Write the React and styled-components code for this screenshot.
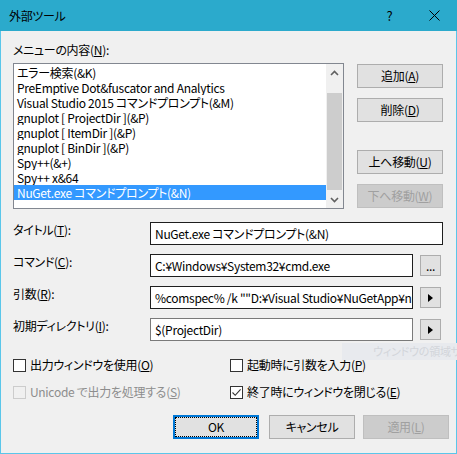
import React from "react";
import styled, { createGlobalStyle, css } from "styled-components";

const Global = createGlobalStyle`
  html, body { margin: 0; padding: 0; background: #f0f0f0; }
  body {
    font-family: "Noto Sans CJK JP", "Noto Sans", sans-serif;
    font-size: 12px;
    letter-spacing: -0.3px;
    color: #000;
    font-feature-settings: "palt";
  }
  * { box-sizing: border-box; }
`;

const Window = styled.div`
  position: relative;
  width: 457px;
  height: 454px;
  display: flex;
  flex-direction: column;
  overflow: hidden;
  background: #f0f0f0;
`;

const TitleBar = styled.div`
  flex: none;
  height: 31px;
  background: #2baacc;
  display: flex;
  align-items: center;
`;

const Title = styled.div`
  flex: 1;
  padding-left: 9px;
  line-height: 16px;
`;

const CaptionButton = styled.div`
  width: 45px;
  height: 31px;
  display: flex;
  align-items: center;
  justify-content: center;
  font-size: 13px;
`;

const Body = styled.div`
  flex: 1;
  display: flex;
  flex-direction: column;
  border: 1px solid #5ac6ea;
  border-top: none;
  padding: 11px 13px 0 12px;
`;

const Key = styled.span`
  text-decoration: underline;
  text-underline-offset: 1px;
`;

const SectionLabel = styled.div`
  line-height: 16px;
  height: 16px;
`;

const TopGrid = styled.div`
  margin-top: 5px;
  display: grid;
  grid-template-columns: 331px 86px;
  column-gap: 13px;
  align-items: start;
`;

const ListBox = styled.div`
  height: 146px;
  border: 1px solid #828790;
  background: #fff;
  display: grid;
  grid-template-columns: 1fr 17px;
`;

const Items = styled.div`
  padding-top: 1px;
  overflow: hidden;
`;

const Item = styled.div`
  height: 15px;
  line-height: 15px;
  padding-left: 3px;
  white-space: nowrap;
  overflow: hidden;
  ${(p) =>
    p.$selected &&
    css`
      background: #3399ff;
      color: #fff;
    `}
`;

const ScrollBar = styled.div`
  background: #f0f0f0;
  display: flex;
  flex-direction: column;
`;

const ScrollArrow = styled.div`
  flex: none;
  height: 17px;
  display: flex;
  align-items: center;
  justify-content: center;
`;

const ScrollTrack = styled.div`
  flex: 1;
  padding: 12px 1px 0 1px;
`;

const ScrollThumb = styled.div`
  height: 97px;
  background: #cdcdcd;
`;

const ButtonColumn = styled.div`
  padding-top: 1px;
  display: flex;
  flex-direction: column;
  gap: 10px;
`;

const Button = styled.div`
  flex: none;
  width: 86px;
  height: 24px;
  background: #e1e1e1;
  border: 1px solid #adadad;
  display: flex;
  align-items: center;
  justify-content: center;
  line-height: 16px;
  white-space: nowrap;
  margin-top: ${(p) => p.$gapTop || 0}px;
  ${(p) =>
    p.$disabled &&
    css`
      background: #cccccc;
      border-color: #bfbfbf;
      color: #a0a0a0;
    `}
  ${(p) =>
    p.$focused &&
    css`
      border: 2px solid #0078d7;
      outline: 1px dotted #000;
      outline-offset: -3px;
      margin-right: 2px;
    `}
`;

const FormGrid = styled.div`
  margin-top: 13px;
  display: grid;
  grid-template-columns: 137px 1fr;
  grid-auto-rows: 23px;
  row-gap: 9px;
`;

const FieldLabel = styled.div`
  line-height: 16px;
  align-self: start;
  white-space: nowrap;
`;

const Field = styled.div`
  display: flex;
  align-items: flex-start;
  gap: 7px;
`;

const TextBox = styled.div`
  flex: 1;
  height: 23px;
  background: #fff;
  border: 1px solid ${(p) => (p.$soft ? "#7a7a7a" : "#1e1e1e")};
  padding: 0 4px;
  line-height: 21px;
  white-space: nowrap;
  overflow: hidden;
  ${(p) =>
    p.$narrow &&
    css`
      flex: none;
      width: 263px;
    `}
`;

const SmallButton = styled.div`
  flex: none;
  width: 21px;
  height: 21px;
  margin-top: 1px;
  background: #e1e1e1;
  border: 1px solid #adadad;
  display: flex;
  align-items: center;
  justify-content: center;
  line-height: 12px;
  font-size: 12px;
`;

const CheckGrid = styled.div`
  margin-top: 16px;
  display: grid;
  grid-template-columns: 217px 1fr;
  grid-auto-rows: 16px;
  row-gap: 11px;
`;

const CheckRow = styled.div`
  display: flex;
  align-items: center;
  gap: 4px;
  line-height: 16px;
  white-space: nowrap;
  color: ${(p) => (p.$disabled ? "#8d8d8d" : "#000")};
`;

const Box = styled.div`
  flex: none;
  width: 13px;
  height: 13px;
  border: 1px solid ${(p) => (p.$disabled ? "#cccccc" : "#333333")};
  background: ${(p) => (p.$disabled ? "#f0f0f0" : "#fff")};
  display: flex;
  align-items: center;
  justify-content: center;
`;

const Footer = styled.div`
  margin-top: 15px;
  margin-right: -6px;
  display: flex;
  justify-content: flex-end;
  gap: 8px;
`;

/* faded hover hint left over the right edge of the dialog */
const Tip = styled.div`
  position: absolute;
  left: 342px;
  top: 343px;
  width: 130px;
  height: 17px;
  background: #e8eaee;
  color: #d2d5da;
  padding-left: 31px;
  font-size: 11px;
  letter-spacing: -0.2px;
  line-height: 17px;
  white-space: nowrap;
`;

const Check = ({ checked, disabled, children }) => (
  <CheckRow $disabled={disabled}>
    <Box $disabled={disabled}>
      {checked && (
        <svg width="11" height="11" viewBox="0 0 11 11">
          <path d="M1.5 5.5 L4.2 8.3 L9.6 2.3" fill="none" stroke="#333" strokeWidth="1.1" />
        </svg>
      )}
    </Box>
    <span>{children}</span>
  </CheckRow>
);

const Chevron = ({ down }) => (
  <svg width="9" height="6" viewBox="0 0 9 6">
    <path
      d={down ? "M1 1 L4.5 4.5 L8 1" : "M1 5 L4.5 1.5 L8 5"}
      fill="none"
      stroke="#606060"
      strokeWidth="1.6"
    />
  </svg>
);

const Play = () => (
  <svg width="5" height="8" viewBox="0 0 5 8">
    <polygon points="0,0 5,4 0,8" fill="#000" />
  </svg>
);

const tools = [
  "エラー検索(&K)",
  "PreEmptive Dot&fuscator and Analytics",
  "Visual Studio 2015 コマンドプロンプト(&M)",
  "gnuplot [ ProjectDir ](&P)",
  "gnuplot [ ItemDir ](&P)",
  "gnuplot [ BinDir ](&P)",
  "Spy++(&+)",
  "Spy++ x&64",
  "NuGet.exe コマンドプロンプト(&N)",
];

export default function App() {
  return (
    <>
      <Global />
      <Window>
        <TitleBar>
          <Title>外部ツール</Title>
          <CaptionButton>?</CaptionButton>
          <CaptionButton>
            <svg width="11" height="11" viewBox="0 0 11 11">
              <path d="M0.5 0.5 L10.5 10.5 M10.5 0.5 L0.5 10.5" stroke="#000" strokeWidth="1" />
            </svg>
          </CaptionButton>
        </TitleBar>
        <Body>
          <SectionLabel>
            メニューの内容(<Key>N</Key>):
          </SectionLabel>
          <TopGrid>
            <ListBox>
              <Items>
                {tools.map((t, i) => (
                  <Item key={t} $selected={i === tools.length - 1}>
                    {t}
                  </Item>
                ))}
              </Items>
              <ScrollBar>
                <ScrollArrow>
                  <Chevron />
                </ScrollArrow>
                <ScrollTrack>
                  <ScrollThumb />
                </ScrollTrack>
                <ScrollArrow>
                  <Chevron down />
                </ScrollArrow>
              </ScrollBar>
            </ListBox>
            <ButtonColumn>
              <Button>
                追加(<Key>A</Key>)
              </Button>
              <Button>
                削除(<Key>D</Key>)
              </Button>
              <Button $gapTop={18}>
                上へ移動(<Key>U</Key>)
              </Button>
              <Button $disabled>
                下へ移動(<Key>W</Key>)
              </Button>
            </ButtonColumn>
          </TopGrid>

          <FormGrid>
            <FieldLabel>
              タイトル(<Key>T</Key>):
            </FieldLabel>
            <Field>
              <TextBox>NuGet.exe コマンドプロンプト(&amp;N)</TextBox>
            </Field>
            <FieldLabel>
              コマンド(<Key>C</Key>):
            </FieldLabel>
            <Field>
              <TextBox $narrow>C:¥Windows¥System32¥cmd.exe</TextBox>
              <SmallButton>...</SmallButton>
            </Field>
            <FieldLabel>
              引数(<Key>R</Key>):
            </FieldLabel>
            <Field>
              <TextBox $narrow>%comspec% /k ""D:¥Visual Studio¥NuGetApp¥nuget.exe""</TextBox>
              <SmallButton>
                <Play />
              </SmallButton>
            </Field>
            <FieldLabel>
              初期ディレクトリ(<Key>I</Key>):
            </FieldLabel>
            <Field>
              <TextBox $narrow $soft>
                $(ProjectDir)
              </TextBox>
              <SmallButton>
                <Play />
              </SmallButton>
            </Field>
          </FormGrid>

          <CheckGrid>
            <Check>
              出力ウィンドウを使用(<Key>O</Key>)
            </Check>
            <Check>
              起動時に引数を入力(<Key>P</Key>)
            </Check>
            <Check disabled>
              Unicode で出力を処理する(<Key>S</Key>)
            </Check>
            <Check checked>
              終了時にウィンドウを閉じる(<Key>E</Key>)
            </Check>
          </CheckGrid>

          <Footer>
            <Button $focused>OK</Button>
            <Button>キャンセル</Button>
            <Button $disabled>
              適用(<Key>L</Key>)
            </Button>
          </Footer>
        </Body>
        <Tip>ウィンドウの領域サ</Tip>
      </Window>
    </>
  );
}
